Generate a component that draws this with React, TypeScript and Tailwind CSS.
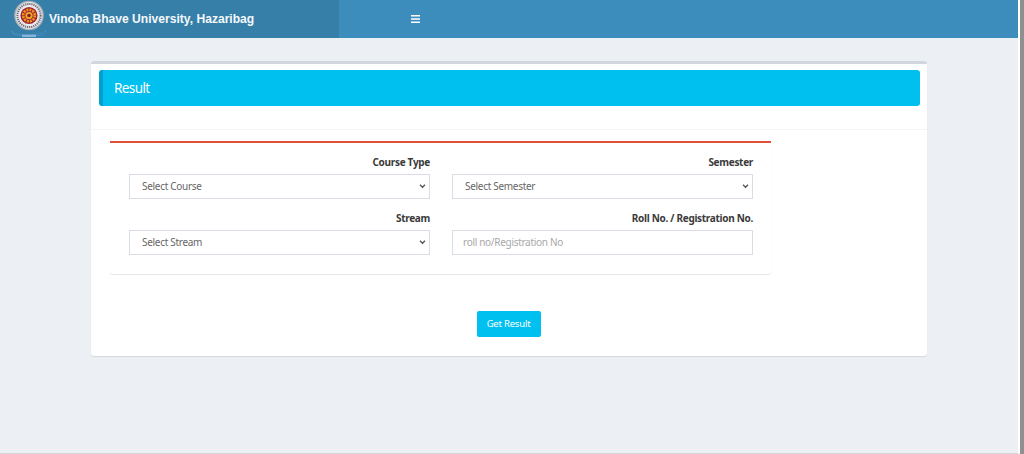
export default function App() {
  const font = "font-['Noto_Sans','Open_Sans',sans-serif]";
  return (
    <div className={`flex h-[454px] w-[1024px] overflow-hidden bg-white ${font}`}>
      <div className="flex w-[1018px] flex-col bg-[#ecf0f5] border-b border-[#d2d6de]">
        <header className="flex h-[38px] shrink-0 bg-[#3c8dbc]">
          <div className="flex w-[339px] items-center bg-[#367fa9]">
            <svg viewBox="0 0 38 38" className="ml-[10px] h-[38px] w-[38px] shrink-0">
              <path d="M2 31c1 3 3 4 6 4l10 2h2l10-2c3 0 5-1 6-4l-1 0c-1 2-3 3-6 3l-10 1h-2l-10-1c-3 0-5-1-6-3z" fill="#2a6da3" stroke="#4f9ad2" strokeWidth="0.6" />
              <circle cx="19" cy="15.5" r="14.8" fill="#a9b0b6" />
              <circle cx="19" cy="15.5" r="13.4" fill="#e4e7ea" />
              <circle cx="19" cy="15.5" r="11.6" fill="none" stroke="#6f6a78" strokeWidth="2" strokeDasharray="1.2 0.9" />
              <circle cx="19" cy="15.5" r="9.4" fill="#f1f1ee" />
              <circle cx="19" cy="15.5" r="8.6" fill="#a5252f" />
              <circle cx="19" cy="15.5" r="5.8" fill="none" stroke="#e79a1f" strokeWidth="2.6" strokeDasharray="2 1" />
              <circle cx="19" cy="15.5" r="3.6" fill="#e9a92c" />
              <circle cx="19" cy="15.5" r="1.8" fill="#8c1d24" />
              <rect x="12" y="34.6" width="14" height="2.4" fill="#86b5d6" />
            </svg>
            <span className="ml-[1px] whitespace-nowrap font-['Liberation_Sans',sans-serif] text-[12.1px] font-bold text-[#f4f8fb]">
              Vinoba Bhave University, Hazaribag
            </span>
          </div>
          <div className="flex flex-1 items-center pl-[72px]">
            <svg viewBox="0 0 10 8" className="h-[8px] w-[9px]" preserveAspectRatio="none" fill="#fff">
              <rect width="10" height="1.6" y="0" rx="0.3" />
              <rect width="10" height="1.6" y="3.2" rx="0.3" />
              <rect width="10" height="1.6" y="6.4" rx="0.3" />
            </svg>
          </div>
        </header>

        <main className="pl-[91px] pt-[23px]">
          <section className="h-[295px] w-[836px] rounded-[3px] border-t-[3px] border-[#d2d6de] bg-white shadow-[0_1px_1px_rgba(0,0,0,0.1)]">
            <div className="h-[66px] border-b border-[#f4f4f4] pl-[8px] pr-[7px] pt-[6px]">
              <div className="flex h-[36px] items-center rounded-[3px] border-l-[4px] border-[#00a0cf] bg-[#00c0ef] pl-[11px] pt-[1px] text-[13.5px] tracking-[-0.6px] text-white">
                Result
              </div>
            </div>

            <div className="pl-[19px] pt-[11px]">
              <div className="h-[133px] w-[661px] rounded-b-[3px] border-t-2 border-[#e04f3a] bg-white shadow-[0_1px_1px_rgba(0,0,0,0.1)] px-[19px] pt-[9px]">
                <div className="grid w-[624px] grid-cols-[301px_301px] gap-x-[22px] gap-y-[9px]">
                  <Field label="Course Type"><Select text="Select Course" /></Field>
                  <Field label="Semester"><Select text="Select Semester" /></Field>
                  <Field label="Stream"><Select text="Select Stream" /></Field>
                  <Field label="Roll No. / Registration No.">
                    <input
                      placeholder="roll no/Registration No"
                      className="block h-[25px] w-full border border-[#d9dce3] bg-white px-[10px] pb-[1px] text-[10px] tracking-[-0.3px] text-[#555] placeholder:text-[#a8a8a8] outline-none"
                    />
                  </Field>
                </div>
              </div>
              <div className="mt-[37px] flex w-[797px] justify-center">
                <button className="h-[26px] w-[64px] rounded-[2px] bg-[#00c0ef] text-[9.5px] tracking-[-0.2px] text-white">
                  Get Result
                </button>
              </div>
            </div>
          </section>
        </main>
      </div>
      <div className="ml-[2px] w-[4px] bg-[#8f8f8f]" />
    </div>
  );
}

function Field({ label, children }: { label: string; children: React.ReactNode }) {
  return (
    <div className="flex flex-col">
      <label className="mb-[4px] h-[18px] pt-[1px] text-right text-[10px] font-bold leading-[18px] tracking-[-0.3px] text-[#3a3a3a]">{label}</label>
      {children}
    </div>
  );
}

function Select({ text }: { text: string }) {
  return (
    <div className="relative h-[25px] w-full">
      <select className="block h-[25px] w-full appearance-none rounded-none border border-[#d9dce3] bg-white pl-[12px] text-[10px] tracking-[-0.3px] text-[#666] outline-none">
        <option>{text}</option>
      </select>
      <svg viewBox="0 0 8 6" className="pointer-events-none absolute right-[4px] top-[10px] h-[5px] w-[7px]" fill="none" stroke="#555" strokeWidth="1.6">
        <path d="M1 1l3 3 3-3" />
      </svg>
    </div>
  );
}
